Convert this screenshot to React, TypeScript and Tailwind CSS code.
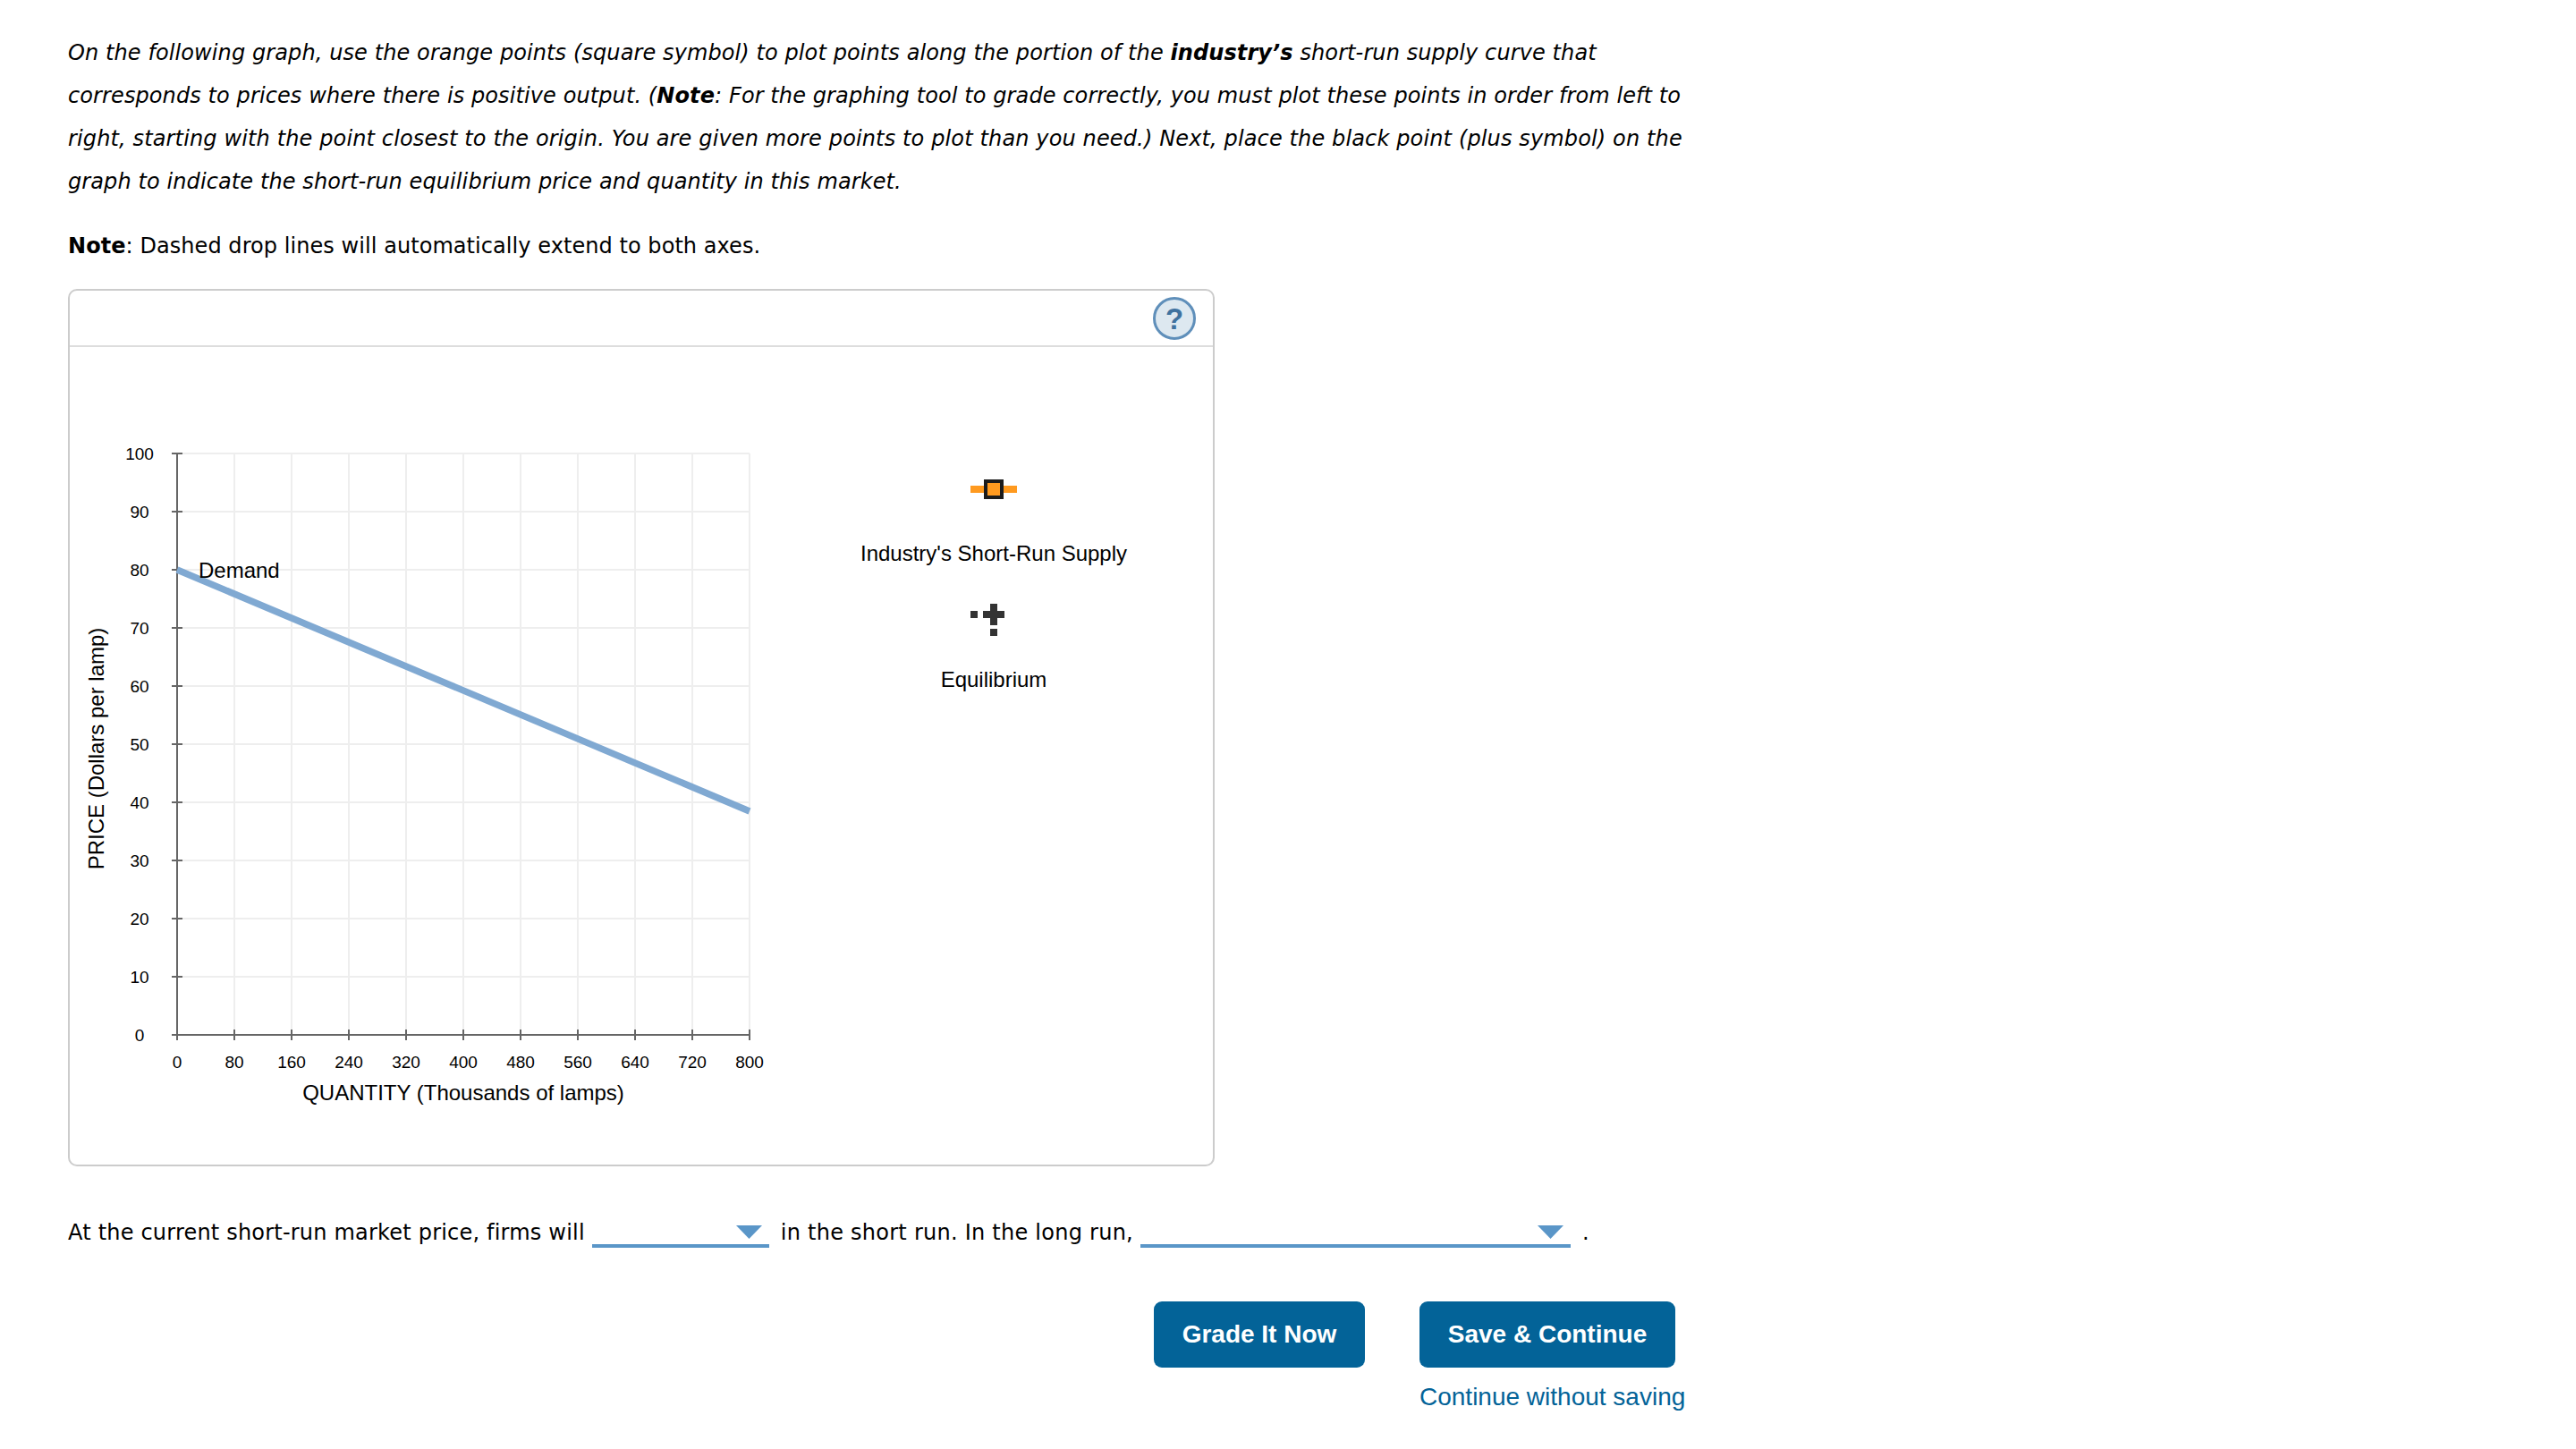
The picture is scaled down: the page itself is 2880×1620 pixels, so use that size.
const prices = [0, 10, 20, 30, 40, 50, 60, 70, 80, 90, 100];
const quantities = [0, 80, 160, 240, 320, 400, 480, 560, 640, 720, 800];

const originX = 198;
const originY = 1157;
const stepX = 64;
const stepY = 65;

function Chart() {
  return (
    <svg width="860" height="900" viewBox="78 388 860 900" className="shrink-0 font-['Liberation_Sans',Arial,sans-serif]">
      {/* grid */}
      {quantities.slice(1).map((q, i) => (
        <line key={q} x1={originX + (i + 1) * stepX} x2={originX + (i + 1) * stepX} y1={507} y2={originY} stroke="#eeeeee" strokeWidth="2" />
      ))}
      {prices.slice(1).map((p, i) => (
        <line key={p} x1={originX} x2={838} y1={originY - (i + 1) * stepY} y2={originY - (i + 1) * stepY} stroke="#eeeeee" strokeWidth="2" />
      ))}

      {/* axes and ticks */}
      <line x1={originX} x2={originX} y1={506} y2={1163} stroke="#666666" strokeWidth="2" />
      <line x1={192} x2={838} y1={originY} y2={originY} stroke="#666666" strokeWidth="2" />
      {prices.map((p, i) => (
        <line key={p} x1={192} x2={204} y1={originY - i * stepY} y2={originY - i * stepY} stroke="#666666" strokeWidth="2" />
      ))}
      {quantities.map((q, i) => (
        <line key={q} x1={originX + i * stepX} x2={originX + i * stepX} y1={1151} y2={1163} stroke="#666666" strokeWidth="2" />
      ))}

      {/* tick labels */}
      {prices.map((p, i) => (
        <text key={p} x={156} y={originY - i * stepY + 6.5} textAnchor="middle" fontSize="19" fill="#000000">
          {p}
        </text>
      ))}
      {quantities.map((q, i) => (
        <text key={q} x={originX + i * stepX} y={1193.5} textAnchor="middle" fontSize="19" fill="#000000">
          {q}
        </text>
      ))}

      {/* demand curve */}
      <line x1={198} y1={637} x2={838} y2={907} stroke="#80a9d2" strokeWidth="7.5" />
      <text x={222} y={646} fontSize="24" fill="#000000">Demand</text>

      {/* axis titles */}
      <text x={518} y={1230} textAnchor="middle" fontSize="24" fill="#000000">QUANTITY (Thousands of lamps)</text>
      <text transform="translate(116 837) rotate(-90)" textAnchor="middle" fontSize="24" fill="#000000">PRICE (Dollars per lamp)</text>
    </svg>
  );
}

function SupplyIcon() {
  return (
    <svg width="52" height="22" viewBox="0 0 52 22" className="block">
      <rect x="0" y="7" width="52" height="8" fill="#ff9a1f" />
      <rect x="17" y="2" width="18" height="18" fill="#ff9a1f" stroke="#1c1c1c" strokeWidth="4" />
    </svg>
  );
}

function EquilibriumIcon() {
  return (
    <svg width="52" height="36" viewBox="0 0 52 36" className="block">
      <rect x="0" y="8" width="8" height="8" fill="#333333" />
      <rect x="14" y="8" width="24" height="8" fill="#333333" />
      <rect x="22" y="0" width="8" height="24" fill="#333333" />
      <rect x="22" y="28" width="8" height="8" fill="#333333" />
    </svg>
  );
}

function Dropdown({ width }: { width: string }) {
  return (
    <span className={`${width} mr-[13px] ml-[8px] inline-flex h-[41px] justify-end border-b-4 border-[#5a96c8] pt-[16px] pr-[8px] align-top`}>
      <svg width="29" height="15" viewBox="0 0 29 15" className="block">
        <path d="M0 0H29L14.5 15Z" fill="#5a96c8" />
      </svg>
    </span>
  );
}

export default function App() {
  return (
    <div className="min-h-[1620px] bg-white pt-[35px] pl-[76px] font-['DejaVu_Sans',Verdana,sans-serif] text-[24px] leading-[48px] text-black">
      <p className="w-[1830px] tracking-[0.1px] italic">
        On the following graph, use the orange points (square symbol) to plot points along the portion of the{" "}
        <strong className="font-bold">industry’s</strong> short-run supply curve that
        <br />
        corresponds to prices where there is positive output. (
        <strong className="font-bold">Note</strong>: For the graphing tool to grade correctly, you must plot these points in order from left to
        <br />
        <span className="tracking-[0.135px]">
          right, starting with the point closest to the origin. You are given more points to plot than you need.) Next, place the black point (plus symbol) on the
        </span>
        <br />
        graph to indicate the short-run equilibrium price and quantity in this market.
      </p>
      <p className="mt-[24px] tracking-[0.06px]">
        <strong className="font-bold">Note</strong>: Dashed drop lines will automatically extend to both axes.
      </p>

      <div className="mt-[24px] h-[981px] w-[1282px] rounded-[10px] border-2 border-[#cccccc]">
        <div className="flex h-[63px] items-start justify-end border-b-2 border-[#dddddd] pt-[7px] pr-[19px]">
          <div className="flex h-[48px] w-[48px] items-center justify-center rounded-full border-[3px] border-[#5f8fba] bg-[#dde8f0] font-['Liberation_Sans',Arial,sans-serif] text-[33px] leading-none font-bold text-[#3f729f]">
            ?
          </div>
        </div>
        <div className="flex font-['Liberation_Sans',Arial,sans-serif] text-[24px] leading-[30px]">
          <Chart />
          <div className="flex w-[346px] flex-col items-center pt-[148px]">
            <SupplyIcon />
            <div className="mt-[46px]">Industry's Short-Run Supply</div>
            <div className="mt-[41px]">
              <EquilibriumIcon />
            </div>
            <div className="mt-[34px]">Equilibrium</div>
          </div>
        </div>
      </div>

      <div className="mt-[50px] tracking-[0.2px] whitespace-nowrap">
        At the current short-run market price, firms will
        <Dropdown width="w-[198px]" />
        <span className="tracking-[0.25px]">in the short run. In the long run,</span>
        <Dropdown width="w-[481px]" />
        <span>.</span>
      </div>

      <div className="mt-[53px] ml-[1214px] font-['Liberation_Sans',Arial,sans-serif]">
        <div className="flex gap-[61px]">
          <button className="h-[74px] w-[236px] rounded-[9px] bg-[#036398] text-[28px] font-bold text-white">Grade It Now</button>
          <button className="h-[74px] w-[286px] rounded-[9px] bg-[#036398] text-[28px] font-bold text-white">Save &amp; Continue</button>
        </div>
        <a className="mt-[9px] ml-[297px] block w-fit text-[28px] leading-[48px] whitespace-nowrap text-[#036398]">Continue without saving</a>
      </div>
    </div>
  );
}
